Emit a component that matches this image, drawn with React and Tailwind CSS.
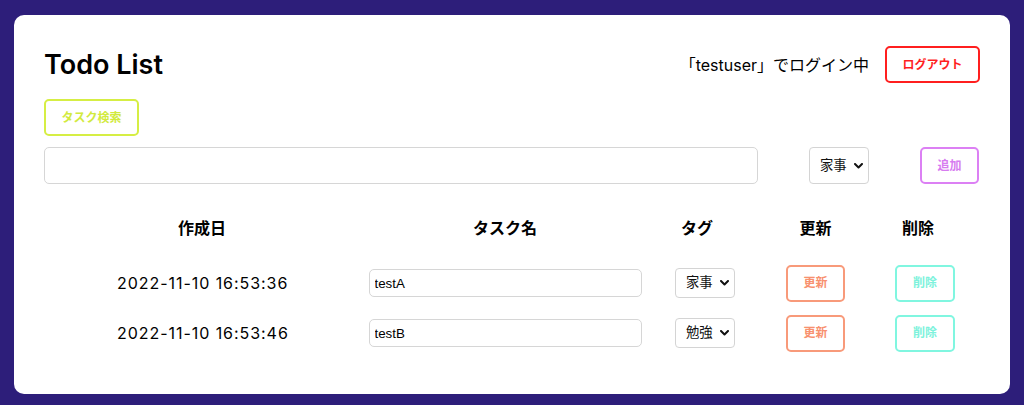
import React from "react";

const font = { fontFamily: 'Inter, "Noto Sans CJK JP", sans-serif' };

function Chevron() {
  return (
    <svg width="9" height="6" viewBox="0 0 9 6" className="shrink-0">
      <path d="M1 1 L4.5 4.5 L8 1" fill="none" stroke="#111" strokeWidth="2" strokeLinecap="round" strokeLinejoin="round" />
    </svg>
  );
}

function FakeSelect({ value, className }) {
  return (
    <div className={`flex items-center justify-between rounded-[4px] border border-[#d4d4d4] bg-white pl-[10px] pr-[5px] text-[13.33px] text-[#111] ${className}`}>
      <span>{value}</span>
      <Chevron />
    </div>
  );
}

function OutlineButton({ children, className }) {
  return (
    <button className={`flex h-[37px] items-center justify-center whitespace-nowrap rounded-[5px] border-2 bg-white px-0 text-[12px] font-bold ${className}`}>
      {children}
    </button>
  );
}

const rows = [
  { date: "2022-11-10 16:53:36", name: "testA", tag: "家事" },
  { date: "2022-11-10 16:53:46", name: "testB", tag: "勉強" },
];

const cols = "grid grid-cols-[316px_290px_110px_111px_108px] items-center";

export default function App() {
  return (
    <div className="min-h-[405px] w-full bg-[#2d1e7a] px-[14px] pt-[15px] pb-[11px]" style={font}>
      <div className="h-[379px] rounded-[10px] bg-white px-[30px] pt-[31px]">
        <div className="flex h-[37px] items-center justify-between">
          <h1 className="text-[27px] font-semibold leading-none text-black">Todo List</h1>
          <div className="flex items-center gap-4">
            <span className="text-[16px] text-black">「testuser」でログイン中</span>
            <OutlineButton className="w-[95px] border-[#ff1f1f] text-[#ff1f1f]">ログアウト</OutlineButton>
          </div>
        </div>

        <div className="mt-4">
          <OutlineButton className="w-[95px] border-[#d6ee44] text-[#d2ea3e]">タスク検索</OutlineButton>
        </div>

        <div className="mt-[11px] flex h-[37px] items-center">
          <input className="h-[37px] w-[714px] rounded-[5px] border border-[#d6d6d6] bg-white px-2 text-[13.33px] outline-none" />
          <FakeSelect value="家事" className="ml-[51px] h-[37px] w-[60px]" />
          <OutlineButton className="ml-[51px] w-[59px] border-[#dc80f4] text-[#d77cf0]">追加</OutlineButton>
        </div>

        <div className={`${cols} mt-[24px] h-[40px] text-[16px] font-bold text-black`}>
          <div className="text-center">作成日</div>
          <div className="text-center">タスク名</div>
          <div className="pr-[16px] text-center">タグ</div>
          <div className="text-center">更新</div>
          <div className="pr-[14px] text-center">削除</div>
        </div>

        <div className="mt-[10px]">
          {rows.map((r) => (
            <div key={r.date} className={`${cols} h-[50px]`}>
              <div className="pl-[73px] text-[16px] tracking-[0.95px] text-black">{r.date}</div>
              <div className="flex justify-center">
                <input
                  readOnly
                  value={r.name}
                  className="h-[28px] w-[273px] rounded-[5px] border border-[#d6d6d6] bg-white px-[5px] text-[13.33px] text-black outline-none"
                  style={{ fontFamily: '"Liberation Sans", Arial, sans-serif' }}
                />
              </div>
              <div className="flex justify-center">
                <FakeSelect value={r.tag} className="h-[30px] w-[60px]" />
              </div>
              <div className="flex justify-center">
                <OutlineButton className="w-[59px] border-[#f89a7a] text-[#f8916f]">更新</OutlineButton>
              </div>
              <div className="flex justify-center">
                <OutlineButton className="w-[60px] border-[#80f6e0] text-[#7df2dc]">削除</OutlineButton>
              </div>
            </div>
          ))}
        </div>
      </div>
    </div>
  );
}
